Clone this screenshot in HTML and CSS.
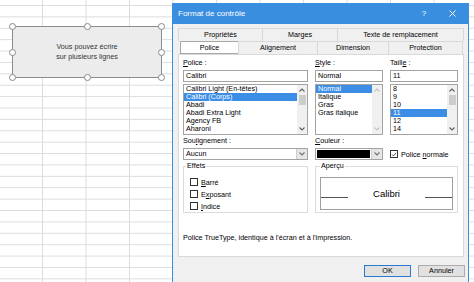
FILE: index.html
```html
<!DOCTYPE html>
<html lang="fr">
<head>
<meta charset="utf-8">
<title>Format de contrôle</title>
<link rel="stylesheet" href="styles.css">
</head>
<body>
<div class="shape">
  <p class="shape-text">Vous pouvez écrire<br>sur plusieurs lignes</p>
  <span class="handle h-tl"></span>
  <span class="handle h-tc"></span>
  <span class="handle h-tr"></span>
  <span class="handle h-ml"></span>
  <span class="handle h-mr"></span>
  <span class="handle h-bl"></span>
  <span class="handle h-bc"></span>
  <span class="handle h-br"></span>
</div>

<section class="dialog">
  <header class="titlebar">
    <span class="title">Format de contrôle</span>
    <span class="help">?</span>
    <span class="close"><svg class="close-ico" viewBox="0 0 7 7"><path d="M0.5 0.5L6.5 6.5M6.5 0.5L0.5 6.5" stroke="#fff" stroke-width="1" fill="none"/></svg></span>
  </header>

  <div class="tabs">
    <div class="tabrow row-back">
      <span class="tab w-prop">Propriétés</span>
      <span class="tab w-marg">Marges</span>
      <span class="tab w-texte">Texte de remplacement</span>
    </div>
    <div class="tabrow row-front">
      <span class="tab tab-active w-police">Police</span>
      <span class="tab w-align">Alignement</span>
      <span class="tab w-dim">Dimension</span>
      <span class="tab w-prot">Protection</span>
    </div>
  </div>

  <div class="panel">
    <div class="field">
      <label class="lbl"><u>P</u>olice :</label>
      <div class="input">Calibri</div>
      <div class="listbox">
        <ul class="items">
          <li>Calibri Light (En-têtes)</li>
          <li class="sel">Calibri (Corps)</li>
          <li>Abadi</li>
          <li>Abadi Extra Light</li>
          <li>Agency FB</li>
          <li>Aharoni</li>
        </ul>
        <div class="sbar">
          <span class="arrow"><svg class="chev" viewBox="0 0 6 4"><path d="M0.5 3.5L3 1L5.5 3.5" stroke="#606060" stroke-width="1.1" fill="none"/></svg></span>
          <span class="track"><span class="thumb"></span></span>
          <span class="arrow"><svg class="chev" viewBox="0 0 6 4"><path d="M0.5 0.5L3 3L5.5 0.5" stroke="#606060" stroke-width="1.1" fill="none"/></svg></span>
        </div>
      </div>
    </div>

    <div class="field">
      <label class="lbl"><u>S</u>tyle :</label>
      <div class="input">Normal</div>
      <div class="listbox">
        <ul class="items">
          <li class="sel">Normal</li>
          <li>Italique</li>
          <li>Gras</li>
          <li>Gras italique</li>
        </ul>
        <div class="sbar">
          <span class="arrow"><svg class="chev" viewBox="0 0 6 4"><path d="M0.5 3.5L3 1L5.5 3.5" stroke="#c4c4c4" stroke-width="1.1" fill="none"/></svg></span>
          <span class="track"></span>
          <span class="arrow"><svg class="chev" viewBox="0 0 6 4"><path d="M0.5 0.5L3 3L5.5 0.5" stroke="#c4c4c4" stroke-width="1.1" fill="none"/></svg></span>
        </div>
      </div>
    </div>

    <div class="field">
      <label class="lbl">Taill<u>e</u> :</label>
      <div class="input">11</div>
      <div class="listbox">
        <ul class="items">
          <li>8</li>
          <li>9</li>
          <li>10</li>
          <li class="sel">11</li>
          <li>12</li>
          <li>14</li>
        </ul>
        <div class="sbar">
          <span class="arrow"><svg class="chev" viewBox="0 0 6 4"><path d="M0.5 3.5L3 1L5.5 3.5" stroke="#606060" stroke-width="1.1" fill="none"/></svg></span>
          <span class="track"><span class="thumb"></span></span>
          <span class="arrow"><svg class="chev" viewBox="0 0 6 4"><path d="M0.5 0.5L3 3L5.5 0.5" stroke="#606060" stroke-width="1.1" fill="none"/></svg></span>
        </div>
      </div>
    </div>

    <div class="field">
      <label class="lbl">Sou<u>l</u>ignement :</label>
      <div class="dropdown">
        <span class="dd-value">Aucun</span>
        <span class="dd-btn"><svg class="chev" viewBox="0 0 6 4"><path d="M0.5 0.5L3 3L5.5 0.5" stroke="#707070" stroke-width="1.1" fill="none"/></svg></span>
      </div>
    </div>

    <div class="field">
      <label class="lbl"><u>C</u>ouleur :</label>
      <div class="dropdown">
        <span class="swatch"></span>
        <span class="dd-btn"><svg class="chev" viewBox="0 0 6 4"><path d="M0.5 0.5L3 3L5.5 0.5" stroke="#707070" stroke-width="1.1" fill="none"/></svg></span>
      </div>
    </div>

    <div class="field field-end">
      <div class="check">
        <span class="box"><svg class="tick" viewBox="0 0 8 8"><path d="M1.3 4L3.2 5.9L6.7 1.9" stroke="#222" stroke-width="1" fill="none"/></svg></span>
        <span>Police <u>n</u>ormale</span>
      </div>
    </div>

    <fieldset class="group">
      <legend class="legend">Effets</legend>
      <div class="effets-body">
        <div class="check"><span class="box"></span><span><u>B</u>arré</span></div>
        <div class="check"><span class="box"></span><span>E<u>x</u>posant</span></div>
        <div class="check"><span class="box"></span><span><u>I</u>ndice</span></div>
      </div>
    </fieldset>

    <fieldset class="group group-wide">
      <legend class="legend legend-wide">Aperçu</legend>
      <div class="apercu-body">
        <div class="preview">
          <span class="pline"></span>
          <span class="ptext">Calibri</span>
          <span class="pline"></span>
        </div>
      </div>
    </fieldset>

    <p class="desc">Police TrueType, identique à l'écran et à l'impression.</p>
  </div>

  <div class="buttons">
    <button class="btn btn-default">OK</button>
    <button class="btn">Annuler</button>
  </div>
</section>
</body>
</html>
```

FILE: styles.css
```css
body {
  margin: 0;
  width: 474px;
  height: 282px;
  overflow: hidden;
  position: relative;
  font-family: "Liberation Sans", Arial, sans-serif;
  color: #000;
  background-color: #fff;
  background-image:
    linear-gradient(to right, #dcdcdc 1px, transparent 1px),
    linear-gradient(to bottom, #dcdcdc 1px, transparent 1px);
  background-size: 43.5px 100%, 100% 11.4px;
  background-position: 42px 0, 0 5px;
}

/* ---------- shape (text box on the sheet) ---------- */
.shape {
  position: absolute;
  left: 12px;
  top: 26px;
  width: 150px;
  height: 52px;
  box-sizing: border-box;
  background: #ececec;
  border: 1px solid #8c8c8c;
  display: flex;
  align-items: center;
  justify-content: center;
}
.shape-text {
  margin: 0;
  text-align: center;
  font-size: 7.2px;
  line-height: 10px;
  color: #333;
}
.handle {
  position: absolute;
  width: 7px;
  height: 7px;
  box-sizing: border-box;
  border-radius: 50%;
  background: #fff;
  border: 1px solid #8a8a8a;
}
.h-tl { left: -4px; top: -4px; }
.h-tc { left: 50%; margin-left: -3.5px; top: -4px; }
.h-tr { right: -4px; top: -4px; }
.h-ml { left: -4px; top: 50%; margin-top: -3.5px; }
.h-mr { right: -4px; top: 50%; margin-top: -3.5px; }
.h-bl { left: -4px; bottom: -4px; }
.h-bc { left: 50%; margin-left: -3.5px; bottom: -4px; }
.h-br { right: -4px; bottom: -4px; }

/* ---------- dialog window ---------- */
.dialog {
  position: absolute;
  left: 172px;
  top: 3px;
  width: 297px;
  height: 292px;
  box-sizing: border-box;
  background: #f0f0f0;
  border: 1px solid #3a8ee0;
  border-top: 0;
  display: flex;
  flex-direction: column;
  font-size: 7.2px;
}
.titlebar {
  height: 21px;
  margin: 0 -1px;
  background: #3a8ee0;
  color: #fff;
  display: flex;
  align-items: center;
  padding-left: 6px;
  font-size: 8px;
  flex: none;
}
.help {
  margin-left: auto;
  width: 8px;
  text-align: center;
  font-size: 8px;
}
.close {
  width: 8px;
  margin-left: 20px;
  margin-right: 13px;
  display: flex;
  justify-content: center;
}
.close-ico { width: 7px; height: 7px; display: block; }

/* ---------- tabs ---------- */
.tabs {
  margin: 4px 4px 0 5px;
  flex: none;
}
.tabrow {
  display: flex;
  height: 13px;
}
.row-front { padding-left: 2px; }
.tab {
  box-sizing: border-box;
  border: 1px solid #d9d9d9;
  border-bottom: 0;
  margin-right: -1px;
  background: #f0f0f0;
  text-align: center;
  line-height: 12px;
  white-space: nowrap;
}
.tab-active {
  background: #fff;
  border: 1px solid #a8a8a8;
}
.w-prop { width: 85px; }
.w-marg { width: 76px; }
.w-texte { width: 127px; }
.w-police { width: 59px; }
.w-align { width: 80px; }
.w-dim { width: 72px; }
.w-prot { width: 75px; }

/* ---------- panel ---------- */
.panel {
  margin: 0 4px 0 5px;
  height: 203px;
  box-sizing: border-box;
  background: #fff;
  border: 1px solid #d9d9d9;
  padding: 4px 0 0 4px;
  display: grid;
  grid-template-columns: 125px 68px 68px;
  column-gap: 7px;
  row-gap: 2px;
  align-content: start;
  flex: none;
}
.field {
  display: flex;
  flex-direction: column;
}
.field-end { justify-content: flex-end; }
.lbl {
  display: block;
  line-height: 8px;
  height: 8px;
  margin-bottom: 3px;
  white-space: nowrap;
}
.input {
  height: 12px;
  box-sizing: border-box;
  border: 1px solid #a3a3a3;
  padding-left: 2px;
  line-height: 10px;
  background: #fff;
}
.listbox {
  margin-top: 2px;
  height: 51px;
  box-sizing: border-box;
  border: 1px solid #a3a3a3;
  display: flex;
  background: #fff;
}
.items {
  list-style: none;
  margin: 0;
  padding: 0;
  flex: 1;
  overflow: hidden;
}
.items li {
  height: 8px;
  line-height: 8px;
  padding-left: 2px;
  white-space: nowrap;
}
.items .sel {
  background: #3b8de5;
  color: #fff;
}
.sbar {
  width: 10px;
  background: #f0f0f0;
  display: flex;
  flex-direction: column;
}
.arrow {
  height: 10px;
  display: flex;
  align-items: center;
  justify-content: center;
  flex: none;
}
.chev { width: 6px; height: 4px; display: block; }
.track { flex: 1; display: flex; flex-direction: column; align-items: center; }
.thumb {
  width: 7px;
  height: 10px;
  background: #cdcdcd;
}

/* dropdowns */
.dropdown {
  height: 12px;
  box-sizing: border-box;
  border: 1px solid #a3a3a3;
  display: flex;
  align-items: stretch;
  background: #fff;
}
.dd-value {
  flex: 1;
  padding-left: 2px;
  line-height: 10px;
}
.swatch {
  flex: 1;
  margin: 1px;
  background: #000;
}
.dd-btn {
  width: 10px;
  background: #e6e6e6;
  border-left: 1px solid #cfcfcf;
  display: flex;
  align-items: center;
  justify-content: center;
}

/* check boxes */
.check {
  display: flex;
  align-items: center;
  height: 12px;
  gap: 3px;
  white-space: nowrap;
}
.box {
  width: 8px;
  height: 8px;
  box-sizing: border-box;
  border: 1px solid #333;
  background: #fff;
  display: flex;
  align-items: center;
  justify-content: center;
  flex: none;
}
.tick { width: 7px; height: 7px; display: block; }

/* group boxes */
.group {
  margin: 0;
  padding: 0;
  min-width: 0;
  border: 1px solid #dcdcdc;
}
.group-wide { grid-column: 2 / 4; }
.legend {
  padding: 0 1px;
  margin-left: 2px;
  line-height: 8px;
}
.legend-wide { margin-left: 4px; }
.effets-body {
  padding: 6px 0 0 6px;
}
.apercu-body {
  padding: 7px 4px 2px 4px;
}
.preview {
  height: 33px;
  box-sizing: border-box;
  border: 1px solid #a0a0a0;
  display: flex;
  align-items: center;
}
.pline {
  width: 27px;
  height: 1px;
  background: #555;
  margin-top: 8px;
  flex: none;
}
.ptext {
  flex: 1;
  text-align: center;
  font-size: 9.5px;
}
.desc {
  grid-column: 1 / -1;
  margin: 19px 0 0 0;
  line-height: 8px;
  white-space: nowrap;
}

/* buttons */
.buttons {
  display: flex;
  justify-content: flex-end;
  gap: 7px;
  margin-top: 8px;
  padding-right: 3px;
}
.btn {
  width: 47px;
  height: 12px;
  box-sizing: border-box;
  padding: 0;
  margin: 0;
  font: inherit;
  font-size: 7.2px;
  line-height: 10px;
  color: #000;
  background: #e1e1e1;
  border: 1px solid #adadad;
}
.btn-default { border-color: #2a7ad2; }
```
